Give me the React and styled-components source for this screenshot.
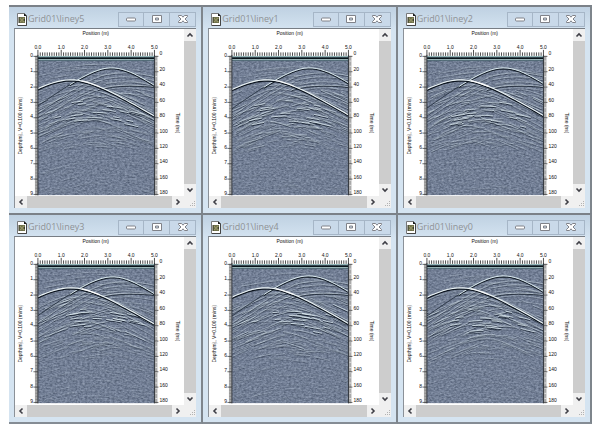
import React from 'react';
import styled, { createGlobalStyle } from 'styled-components';

const PLOT = { x: 24, y: 27, width: 117, height: 140 };

const SCANS = [
  { name: 'liney5', seed: 11, a: [33, 24], b: [74, 12], glow: 0.7 },
  { name: 'liney1', seed: 27, a: [35, 24], b: [78, 12], glow: 0.6 },
  { name: 'liney2', seed: 38, a: [34, 24], b: [77, 12], glow: 0.9 },
  { name: 'liney3', seed: 46, a: [33, 24], b: [75, 13], glow: 0.9 },
  { name: 'liney4', seed: 59, a: [34, 24], b: [77, 12], glow: 0.7 },
  { name: 'liney0', seed: 63, a: [34, 24], b: [77, 12], glow: 0.6 },
];

const range = (n) => Array.from({ length: n }, (_, i) => i);

const createRandom = (seed) => {
  let state = seed * 7919;
  return () => {
    state = (state * 16807) % 2147483647;
    return state / 2147483647;
  };
};

// diffraction hyperbola sampled between two x positions
const hyperbola = ([x0, y0], slope, width, from, to) => {
  const steps = Math.max(4, Math.round((to - from) / 4));
  return range(steps + 1)
    .map((i) => {
      const x = from + ((to - from) * i) / steps;
      const y = y0 - width + Math.sqrt(width ** 2 + (slope * (x - x0)) ** 2);
      return `${i ? 'L' : 'M'}${x.toFixed(1)} ${y.toFixed(1)}`;
    })
    .join('');
};

const createEchoes = ({ seed, a, b }) => {
  const random = createRandom(seed);
  const echoes = [];

  range(150).forEach(() => {
    const y = 30 + random() * 54;
    const x = random() * 124 - 12;
    const length = 8 + random() * 24;
    const apex = 30 + random() * 60;
    const rise = Math.abs(x + length / 2 - apex) * 0.34;
    echoes.push({
      d: hyperbola([apex, y - rise + 8], 0.5, 12, x, x + length),
      opacity: (0.12 + random() * 0.48) * (y > 66 ? 0.6 : 1),
    });
  });

  range(22).forEach(() => {
    const y = 8 + random() * 22;
    const x = random() * 100;
    echoes.push({
      d: hyperbola([60, y], 0.25, 10, x, x + 10 + random() * 30),
      opacity: 0.1 + random() * 0.16,
    });
  });

  [5, 9, 14, 20, 26].forEach((depth, i) => {
    echoes.push({ d: hyperbola([a[0] + 12, a[1] + depth], 0.6, 18, 30 + i * 5, 117), opacity: 0.5 - i * 0.06 });
    echoes.push({ d: hyperbola([b[0], b[1] + depth + 2], 0.74, 20, 0, 66 - i * 3), opacity: 0.45 - i * 0.06 });
    echoes.push({ d: hyperbola([b[0] + 14, b[1] + depth], 0.4, 16, 62 + i * 3, 117), opacity: 0.5 - i * 0.06 });
  });

  range(18).forEach(() => {
    const y = 48 + random() * 22;
    const x = 15 + random() * 80;
    echoes.push({ d: hyperbola([55, y - 3], 0.3, 10, x, x + 6 + random() * 10), opacity: 0.9 });
  });

  range(120).forEach(() => {
    const y = 72 + random() * 66;
    const x = random() * 114 - 4;
    echoes.push({
      d: hyperbola([60, y - Math.abs(x - 60) * 0.15], 0.35, 12, x, x + 5 + random() * 14),
      opacity: (0.08 + random() * 0.22) * (y > 95 ? 0.45 : 1),
    });
  });

  return echoes;
};

const Radargram = ({ scan }) => {
  const { a, b, glow, seed } = scan;
  const echoes = createEchoes(scan);
  const grain = `grain-${scan.name}`;
  const clip = `clip-${scan.name}`;
  const mainA = hyperbola(a, 0.62, 19, 0, 117);
  const mainB = hyperbola(b, 0.74, 20, 32, 117);
  const tailB = hyperbola(b, 0.74, 20, 0, 34);
  const cross = hyperbola(a, 0.62, 19, 44, 62);

  return (
    <g transform={`translate(${PLOT.x} ${PLOT.y})`}>
      <defs>
        <clipPath id={clip}>
          <rect width={PLOT.width} height={PLOT.height} />
        </clipPath>
        <filter id={grain} x="0" y="0" width="100%" height="100%" colorInterpolationFilters="sRGB">
          <feTurbulence type="fractalNoise" baseFrequency="0.4 0.6" numOctaves="2" seed={seed} />
          <feColorMatrix values="1.400 0 0 0 -0.24  1.400 0 0 0 -0.19  1.400 0 0 0 -0.1  0 0 0 0 0.24" />
        </filter>
      </defs>
      <g clipPath={`url(#${clip})`} fill="none">
        <rect width={PLOT.width} height={PLOT.height} fill="#717d93" />
        <rect width={PLOT.width} height={PLOT.height} filter={`url(#${grain})`} />
        {echoes.map(({ d, opacity }, i) => (
          <g key={i} opacity={opacity}>
            <path d={d} stroke="#1c2636" strokeWidth="1" transform="translate(0 1)" />
            <path d={d} stroke="#d8e5ec" strokeWidth="0.9" />
          </g>
        ))}
        <path d="M60 34Q74 29 92 29.500T117 31" stroke="#dce8ec" strokeWidth="0.7" opacity="0.8" />
        <path d="M60 35Q74 30.500 92 30.500T117 32" stroke="#202a38" strokeWidth="0.9" />
        <path d={tailB} stroke="#1d2836" strokeWidth="1" opacity="0.8" />
        <path d={mainB} stroke="#151e29" strokeWidth="1.2" transform="translate(0 1)" />
        <path d={mainB} stroke="#dcebef" strokeWidth="1" />
        <path d={mainA} stroke="#0c141e" strokeWidth="1.3" transform="translate(0 1.200)" />
        <path d={mainA} stroke="#edf5f6" strokeWidth="1.1" />
        <path d={cross} stroke="#fff" strokeWidth="1.4" opacity={glow} />
        <rect width={PLOT.width} height="1.500" fill="#8fb3b5" />
        <rect y="1.500" width={PLOT.width} height="2" fill="#07141a" />
        <rect y="3.500" width={PLOT.width} height="1" fill="#c7e8e6" />
        <rect y="4.500" width={PLOT.width} height="0.7" fill="#2f4a55" />
      </g>
      <path d={`M0 -1V${PLOT.height}M${PLOT.width} -1V${PLOT.height}`} stroke="#2f333a" strokeWidth="1" />
    </g>
  );
};

const Chart = ({ scan }) => (
  <ChartCanvas viewBox="1 0 170 168" role="img" aria-label={scan.name}>
    <text x="82" y="6" textAnchor="middle">Position (m)</text>
    {range(6).map((i) => (
      <text key={i} x={24 + i * 23.4} y="20" textAnchor="middle">{i}.0</text>
    ))}
    {range(51).map((i) => (
      <path key={i} d={`M${24 + i * 2.34} ${i % 10 ? 23.5 : 21}V27`} stroke="#222" strokeWidth="0.8" />
    ))}
    <rect x="21" y="27" width="3" height="140" fill="#a9a9a9" />
    <rect x="141" y="27" width="3" height="140" fill="#a9a9a9" />
    {range(46).map((i) => (
      <path key={i} d={`M21.500 ${27.5 + i * 3.08}h2`} stroke="#777" strokeWidth="0.7" />
    ))}
    {range(27).map((i) => (
      <path key={i} d={`M142 ${27 + i * 5.2}h2`} stroke="#eee" strokeWidth="0.8" />
    ))}
    {range(10).map((i) => (
      <g key={i}>
        <path d={`M19.500 ${27.5 + i * 15.4}H24M141 ${27.5 + i * 15.4}H145`} stroke="#444" strokeWidth="0.8" />
        <text x="19" y={28 + i * 15.4} textAnchor="end">{i}</text>
        <text x="146" y={26.5 + i * 15.5}>{i * 20}</text>
      </g>
    ))}
    <text x="8" y="126" transform="rotate(-90 8 126)">Depth(m), V=0.100 (m/ns)</text>
    <text x="163" y="84" transform="rotate(90 163 84)">Time (ns)</text>
    <Radargram scan={scan} />
  </ChartCanvas>
);

const Chevron = ({ d }) => (
  <svg width="8" height="8" viewBox="0 0 8 8" fill="none" stroke="#3f3f46" strokeWidth="1.6">
    <path d={d} />
  </svg>
);

const FileIcon = () => (
  <svg width="10" height="13" viewBox="0 0 10 13">
    <path d="M0.500 0.500H7L9.500 3V12.500H0.500Z" fill="#fff" stroke="#77787a" />
    <path d="M7 0V3H10L7 0Z" fill="#1b1b1b" />
    <path d="M9.500 3V12.500H1" fill="none" stroke="#444" />
    <rect x="2" y="4" width="6" height="6" fill="#6f714a" />
    <path d="M3 5L4.500 7L7 5M3 9L5 7.500L7 9" fill="none" stroke="#a5a273" strokeWidth="0.9" />
    <path d="M2 4V10M7.500 6V8" stroke="#3b3d2b" />
  </svg>
);

const CaptionIcon = ({ kind }) => (
  <svg width="12" height="10" viewBox="0 0 12 10" fill="#fff" stroke="#808289" strokeLinejoin="round">
    {kind === 'Minimize' && <rect x="1.500" y="4" width="9" height="3" rx="1" />}
    {kind === 'Maximize' && <path d="M1.500 1.500H10.500V8.500H1.500ZM4.500 4V6H7.500V4Z" fillRule="evenodd" />}
    {kind === 'Close' && (
      <path d="M1.500 1.500H4.500L6 3.200L7.500 1.500H10.500V2.500L8 5L10.500 7.500V8.500H7.500L6 6.800L4.500 8.500H1.500V7.500L4 5L1.500 2.500Z" />
    )}
  </svg>
);

const ScanWindow = ({ scan }) => (
  <Window>
    <TitleBar>
      <FileIcon />
      <Title>{`Grid01\\${scan.name}`}</Title>
      <Caption>
        {['Minimize', 'Maximize', 'Close'].map((kind) => (
          <CaptionButton key={kind} type="button" aria-label={kind}>
            <CaptionIcon kind={kind} />
          </CaptionButton>
        ))}
      </Caption>
    </TitleBar>
    <Content>
      <Chart scan={scan} />
      <VerticalBar>
        <ScrollButton type="button" aria-label="Scroll up"><Chevron d="M1.500 5.500L4 3L6.500 5.500" /></ScrollButton>
        <Track />
        <ScrollButton type="button" aria-label="Scroll down"><Chevron d="M1.500 2.500L4 5L6.500 2.500" /></ScrollButton>
      </VerticalBar>
      <HorizontalBar>
        <ScrollButton type="button" aria-label="Scroll left"><Chevron d="M5.500 1.500L3 4L5.500 6.500" /></ScrollButton>
        <Track />
        <ScrollButton type="button" aria-label="Scroll right"><Chevron d="M2.500 1.500L5 4L2.500 6.500" /></ScrollButton>
      </HorizontalBar>
      <Grip>
        <svg width="8" height="8" viewBox="0 0 8 8" fill="#b3b3b3">
          <path d="M6 1h1v1h-1zM6 3h1v1h-1zM4 3h1v1h-1zM6 5h1v1h-1zM4 5h1v1h-1zM2 5h1v1h-1z" />
        </svg>
      </Grip>
    </Content>
  </Window>
);

const App = () => (
  <>
    <GlobalStyle />
    <Desktop>
      {SCANS.map((scan) => (
        <ScanWindow key={scan.name} scan={scan} />
      ))}
    </Desktop>
  </>
);

export default App;

const GlobalStyle = createGlobalStyle`
  * {
    box-sizing: border-box;
  }

  body {
    margin: 0;
    background: #fff;
    font-family: 'Open Sans', 'Noto Sans', sans-serif;
  }
`;

const Desktop = styled.main`
  display: grid;
  grid-template-columns: repeat(3, 1fr);
  padding: 5px 8px 4px 9px;
`;

const Window = styled.section`
  padding: 0 5px 5px 5px;
  background: linear-gradient(#bfd1e2, #d5e4f1 24px);
  border-top: 2px solid #7b8188;
  border-right: 2px solid #7e858c;

  &:nth-child(n + 4) {
    border-bottom: 2px solid #858c94;
  }
`;

const TitleBar = styled.header`
  display: flex;
  align-items: center;
  height: 21px;
  padding: 3px 0 0 3px;
`;

const Title = styled.h2`
  flex: 1;
  margin: 0 0 0 1px;
  font-size: 9px;
  line-height: 14px;
  font-weight: 400;
  color: #8f9295;
  white-space: nowrap;
`;

const Caption = styled.div`
  display: flex;
`;

const CaptionButton = styled.button`
  display: flex;
  align-items: center;
  justify-content: center;
  width: 26px;
  height: 15px;
  padding: 0;
  background: #c9d9e9;
  border: 1px solid #a6b6c7;

  & + & {
    border-left: 0;
  }
`;

const Content = styled.div`
  display: grid;
  grid-template-columns: 1fr 12px;
  grid-template-rows: auto 12px;
  background: #fff;
  border-top: 1px solid #777d84;
  border-left: 1px solid #8b9198;
`;

const ChartCanvas = styled.svg`
  display: block;
  width: 100%;
  height: auto;
  font-family: 'Liberation Sans', Arial, sans-serif;
  font-size: 5px;
  fill: #111;
`;

const VerticalBar = styled.div`
  display: flex;
  flex-direction: column;
  background: #f0f0f0;
`;

const HorizontalBar = styled.div`
  display: flex;
  background: #f0f0f0;
`;

const ScrollButton = styled.button`
  display: flex;
  align-items: center;
  justify-content: center;
  flex: none;
  width: 12px;
  height: 12px;
  padding: 0;
  background: #f0f0f0;
  border: 0;
`;

const Track = styled.div`
  flex: 1;
  background: #cdcdcd;
`;

const Grip = styled.div`
  display: flex;
  align-items: flex-end;
  justify-content: flex-end;
  background: #f0f0f0;
`;
